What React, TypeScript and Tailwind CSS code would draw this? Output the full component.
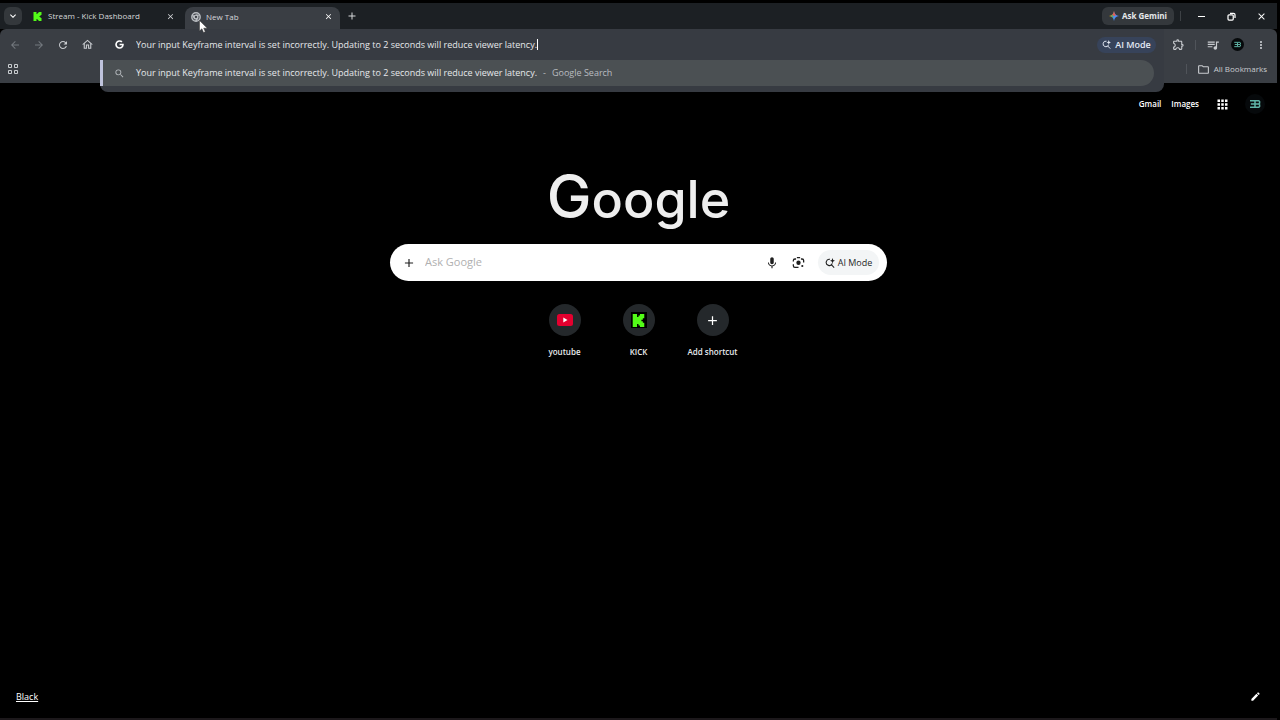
import type { ReactNode } from 'react';
import {
    MdAdd,
    MdApps,
    MdArrowBack,
    MdArrowForward,
    MdClose,
    MdEdit,
    MdExpandMore,
    MdMic,
    MdMoreVert,
    MdOutlineExtension,
    MdOutlineFolder,
    MdOutlineHome,
    MdQueueMusic,
    MdRefresh,
    MdSearch,
} from 'react-icons/md';
import { FaGoogle } from 'react-icons/fa';
import { SiKick } from 'react-icons/si';

const QUERY = 'Your input Keyframe interval is set incorrectly. Updating to 2 seconds will reduce viewer latency.';

const AiSearchIcon = ({ size }: { size: number }) => (
    <svg width={size} height={size} viewBox="0 0 24 24" fill="none" stroke="currentColor" strokeWidth="2.6">
        <path d="M12 3.2A7.500 7.500 0 1 0 17.500 13M14.600 15.400 22 23" />
        <path d="M18 0 19.700 4.800 24 6.500 19.700 8.200 18 13 16.300 8.200 12 6.500 16.300 4.800Z" fill="currentColor" stroke="none" />
    </svg>
);

const GeminiIcon = () => (
    <svg width="10" height="10" viewBox="0 0 24 24">
        <defs>
            <linearGradient id="gemini" x1="0" y1="0.4" x2="1" y2="0.6">
                <stop offset="0.1" stopColor="#f4b400" />
                <stop offset="0.35" stopColor="#5aa57a" />
                <stop offset="0.55" stopColor="#4c8df6" />
                <stop offset="1" stopColor="#5b8cf8" />
            </linearGradient>
        </defs>
        <path d="M12 0c1 7 5 11 12 12-7 1-11 5-12 12-1-7-5-11-12-12 7-1 11-5 12-12Z" fill="url(#gemini)" />
        <path d="M12 0c1 7 3 9 5 10l-5 2-4-3c2-2 3-4 4-9Z" fill="#ea5a4f" />
    </svg>
);

const ChromeIcon = () => (
    <svg width="10" height="10" viewBox="0 0 24 24" fill="none" stroke="#b9bdc1" strokeWidth="3.500">
        <circle cx="12" cy="12" r="10" />
        <circle cx="12" cy="12" r="4.500" />
        <path d="M12 7.500h9M8 14.300 3.600 6.600M16 14.300 11.500 22" />
    </svg>
);

const RestoreIcon = () => (
    <svg width="9" height="9" viewBox="0 0 18 18" fill="none" stroke="currentColor" strokeWidth="2.500">
        <rect x="2" y="5.500" width="10.500" height="10.500" rx="2" />
        <path d="M6 2.500h7a3 3 0 0 1 3 3V12" />
    </svg>
);

const LensIcon = () => (
    <svg width="13" height="13" viewBox="0 0 24 24" fill="none" stroke="currentColor" strokeWidth="2.400">
        <path d="M2.500 10V8.500a3 3 0 0 1 3-3H7.500M9 3h6M16.500 5.500h2a3 3 0 0 1 3 3V12M2.500 15v3a3 3 0 0 0 3 3H12" />
        <circle cx="12" cy="12.500" r="4" fill="currentColor" stroke="none" />
        <circle cx="19" cy="18.500" r="2" fill="currentColor" stroke="none" />
    </svg>
);

const Avatar = ({ size }: { size: number }) => (
    <svg width={size} height={size} viewBox="0 0 24 24" fill="none" stroke="#5fb3a6" strokeWidth="1.800">
        <circle cx="12" cy="12" r="12" fill="#06090b" stroke="none" />
        <path d="M6 8h6v8H6M7 12h10M12 8h4.500l1 1v2l-1 1 1 1v2l-1 1H12" />
    </svg>
);

const Cursor = () => (
    <svg className="absolute left-2 top-2 z-20" width="9" height="13" viewBox="0 0 9 13">
        <path d="M0.500 0.500v10.500l2.400-2.200 1.600 3.700 1.800-0.800-1.600-3.500h3.600Z" fill="#fff" stroke="#333" strokeWidth="0.500" />
    </svg>
);

const YoutubeIcon = () => (
    <svg width="16" height="12" viewBox="0 0 16 12">
        <rect width="16" height="12" rx="2.500" fill="#e4002f" />
        <path d="M6.300 3.600v4.800L10.500 6Z" fill="#fff" />
    </svg>
);

const IconButton = ({ label, className = '', children }: { label: string; className?: string; children: ReactNode }) => (
    <button aria-label={label} className={`flex items-center justify-center shrink-0 ${className}`}>
        {children}
    </button>
);

const TabStrip = () => (
    <div className="h-[29px] pt-[3px] bg-black">
        <div className="h-[26px] bg-[#1c2024] flex items-center text-[8px] font-medium text-[#d5d7da]">
            <IconButton label="Search tabs" className="ml-1 size-[18px] rounded-md bg-[#34383c] text-white">
                <MdExpandMore size={12} />
            </IconButton>
            <div className="ml-2 w-[155px] pl-[3px] pr-[10px] flex items-center">
                <SiKick size={9} className="text-[#53fc18]" />
                <span className="ml-[6px] flex-1">Stream - Kick Dashboard</span>
                <IconButton label="Close Stream - Kick Dashboard">
                    <MdClose size={9} />
                </IconButton>
            </div>
            <div className="self-end h-[22px] pb-[3px] w-[155px] rounded-t-lg bg-[#3a3e44] pl-[6px] pr-[7px] flex items-center">
                <span className="relative">
                    <ChromeIcon />
                    <Cursor />
                </span>
                <span className="ml-[5px] flex-1">New Tab</span>
                <IconButton label="Close New Tab">
                    <MdClose size={9} className="text-white" />
                </IconButton>
            </div>
            <IconButton label="New tab" className="ml-[6px]">
                <MdAdd size={12} />
            </IconButton>

            <button className="ml-auto h-[18px] w-[72px] rounded-md bg-[#34383c] flex items-center justify-center gap-[3px] font-bold text-[#e6e8ea]">
                <GeminiIcon />
                Ask Gemini
            </button>
            <span className="ml-[6px] w-px h-[10px] bg-[#3d4145]" />
            <IconButton label="Minimize" className="ml-3 w-4">
                <span className="w-[7px] h-px bg-white" />
            </IconButton>
            <IconButton label="Restore" className="ml-[14px] w-4 text-white">
                <RestoreIcon />
            </IconButton>
            <IconButton label="Close window" className="ml-[14px] mr-2 w-4 text-white">
                <MdClose size={11} />
            </IconButton>
        </div>
    </div>
);

const Omnibox = () => (
    <div className="relative ml-[5px] flex-1 h-[31px]">
        <div className="absolute inset-x-0 top-0 z-10 rounded-b-lg bg-[#373b42] pb-[6px]">
            <div className="h-[31px] flex items-center pl-[15px] pr-2">
                <FaGoogle size={9} className="text-white" />
                <input
                    aria-label="Address and search bar"
                    defaultValue={QUERY}
                    className="ml-3 [field-sizing:content] bg-transparent text-[9px] text-[#e6e8eb] outline-none"
                />
                <span className="w-px h-[11px] bg-white" />
                <button className="ml-auto h-4 w-[59px] rounded-full bg-[#37435a] flex items-center justify-center gap-1 text-[9px] font-semibold text-[#e3e9f5]">
                    <AiSearchIcon size={9} />
                    AI Mode
                </button>
            </div>
            <button className="h-[26px] w-[calc(100%-10px)] rounded-r-full bg-[#4b5053] border-l-[3px] border-[#bfc3dc] flex items-center pl-[11px] text-[9px]">
                <MdSearch size={11} className="text-[#b5b9bd]" />
                <span className="ml-[11px] text-[#e6e8eb]">{QUERY}</span>
                <span className="ml-[6px] text-[#b9bcc0]">-</span>
                <span className="ml-[6px] text-[#b9bcc0]">Google Search</span>
            </button>
        </div>
    </div>
);

const Toolbar = () => (
    <div className="bg-[#3a3e44] rounded-t-md">
        <div className="h-[31px] flex items-center text-[#c9ccd0]">
            <IconButton label="Back" className="ml-[7px] w-4 text-[#73787e]">
                <MdArrowBack size={12} />
            </IconButton>
            <IconButton label="Forward" className="ml-2 w-4 text-[#73787e]">
                <MdArrowForward size={12} />
            </IconButton>
            <IconButton label="Reload" className="ml-2 w-4">
                <MdRefresh size={12} />
            </IconButton>
            <IconButton label="Home" className="ml-2 w-4">
                <MdOutlineHome size={13} />
            </IconButton>
            <Omnibox />
            <IconButton label="Extensions" className="ml-[6px] w-4">
                <MdOutlineExtension size={13} />
            </IconButton>
            <span className="ml-[9px] w-px h-[10px] bg-[#50545a]" />
            <IconButton label="Media controls" className="ml-[9px] w-4">
                <MdQueueMusic size={14} />
            </IconButton>
            <IconButton label="Profile" className="ml-2 w-4">
                <Avatar size={13} />
            </IconButton>
            <IconButton label="Menu" className="ml-2 mr-2 w-4">
                <MdMoreVert size={12} />
            </IconButton>
        </div>
        <div className="h-[23px] pb-[5px] flex items-center text-[8px] font-medium text-[#c9ccd0]">
            <IconButton label="Tab groups" className="ml-2">
                <svg width="10" height="10" viewBox="0 0 10 10" fill="none" stroke="currentColor">
                    <path d="M0.500 0.500h3v3h-3zM6.500 0.500h3v3h-3zM0.500 6.500h3v3h-3zM6.500 6.500h3v3h-3z" />
                </svg>
            </IconButton>
            <span className="ml-auto w-px h-[10px] bg-[#50545a]" />
            <button className="ml-[10px] mr-[10px] flex items-center gap-1">
                <MdOutlineFolder size={13} />
                All Bookmarks
            </button>
        </div>
    </div>
);

const Shortcut = ({ label, children }: { label: string; children: ReactNode }) => (
    <a href="#" className="w-[74px] flex flex-col items-center text-[8px] font-semibold text-[#e8eaed]">
        <span className="size-8 rounded-full bg-[#24282b] flex items-center justify-center">{children}</span>
        <span className="mt-[10px] leading-3">{label}</span>
    </a>
);

const NewTabPage = () => (
    <main className="flex-1 flex flex-col">
        <nav className="h-[42px] flex items-center justify-end text-[8px] font-semibold text-white">
            <a href="#">Gmail</a>
            <a href="#" className="ml-[10px]">Images</a>
            <IconButton label="Google apps" className="ml-4">
                <MdApps size={15} />
            </IconButton>
            <IconButton label="Account" className="ml-[15px] mr-3">
                <Avatar size={20} />
            </IconButton>
        </nav>

        <div className="mt-9 flex flex-col items-center">
            <h1 className="h-[83px] font-[Inter] font-medium text-[52px] leading-[70px] text-[#eeeeee]">
                <span className="text-[60px]">G</span>oogle
            </h1>
            <form className="w-[497px] h-[37px] rounded-full bg-white flex items-center pl-3 pr-2 text-[#1f1f1f]">
                <IconButton label="Add files">
                    <MdAdd size={14} />
                </IconButton>
                <input
                    aria-label="Ask Google"
                    placeholder="Ask Google"
                    className="ml-[9px] flex-1 min-w-0 bg-transparent text-[11px] placeholder:text-[#b0b0b0] outline-none"
                />
                <IconButton label="Search by voice">
                    <MdMic size={14} />
                </IconButton>
                <IconButton label="Search by image" className="ml-[13px]">
                    <LensIcon />
                </IconButton>
                <button type="button" className="ml-[13px] h-[25px] w-[61px] rounded-full bg-[#f3f5f6] flex items-center justify-center gap-[3px] text-[9px] font-medium">
                    <AiSearchIcon size={10} />
                    AI Mode
                </button>
            </form>
            <div className="mt-[23px] flex">
                <Shortcut label="youtube">
                    <YoutubeIcon />
                </Shortcut>
                <Shortcut label="KICK">
                    <span className="size-4 bg-black flex items-center justify-center">
                        <SiKick size={13} className="text-[#53fc18]" />
                    </span>
                </Shortcut>
                <Shortcut label="Add shortcut">
                    <MdAdd size={15} className="text-white" />
                </Shortcut>
            </div>
        </div>

        <footer className="mt-auto mb-[15px] px-4 flex items-center justify-between text-[9px] text-white">
            <a href="#" className="underline">Black</a>
            <IconButton label="Customize Chrome">
                <MdEdit size={11} />
            </IconButton>
        </footer>
    </main>
);

const App = () => (
    <div className="min-h-screen bg-black pr-[3px] flex flex-col font-['Open_Sans',sans-serif]">
        <header>
            <TabStrip />
            <Toolbar />
        </header>
        <NewTabPage />
        <div className="h-[2px] bg-[#1c181b]" />
    </div>
);

export default App;
